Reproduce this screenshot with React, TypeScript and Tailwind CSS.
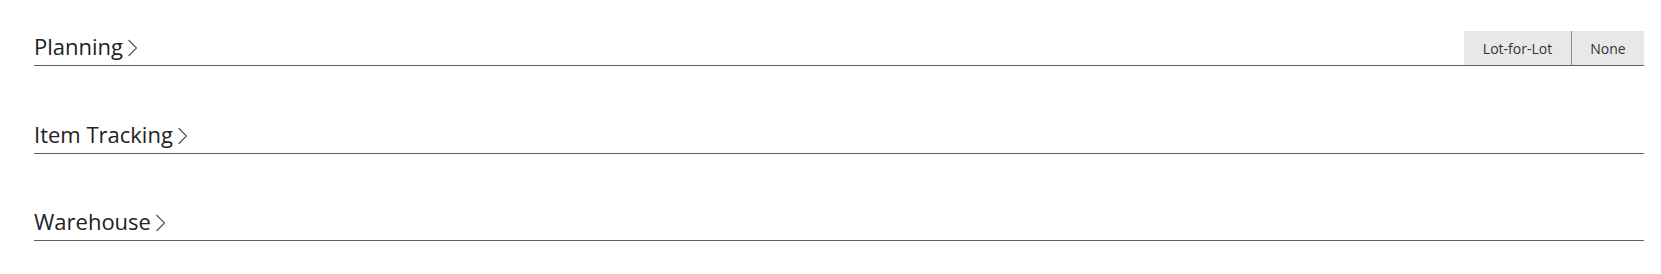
const sections = [
  { title: "Planning", values: ["Lot-for-Lot", "None"] },
  { title: "Item Tracking", values: [] as string[] },
  { title: "Warehouse", values: [] as string[] },
];

function Chevron() {
  return (
    <svg width="11" height="18" viewBox="0 0 11 18" className="ml-[4px] mb-[4px] shrink-0">
      <path d="M1.5 1 L9.5 9 L1.5 17" fill="none" stroke="#505050" strokeWidth="1.1" />
    </svg>
  );
}

export default function App() {
  return (
    <div
      className="min-h-[274px] w-full bg-white pl-[34px] pr-[17px] pt-[31px] text-[#222]"
      style={{ fontFamily: '"Open Sans", "Noto Sans", sans-serif' }}
    >
      {sections.map((s, i) => (
        <div
          key={s.title}
          className={`flex h-[35px] items-end justify-between border-b border-[#565f73] ${
            i === 0 ? "" : i === 1 ? "mt-[53px]" : "mt-[52px]"
          }`}
        >
          <div className="flex items-end pb-[4px]">
            <span className="text-[22px] leading-[30px]">{s.title}</span>
            <Chevron />
          </div>
          {s.values.length > 0 && (
            <div className="flex h-[34px] bg-[#e8e8e8] text-[14px] text-[#333]">
              {s.values.map((v, j) => (
                <div
                  key={v}
                  className={`flex items-center justify-center ${
                    j === 0 ? "w-[107px]" : "w-[73px] border-l border-[#8c8c8c]"
                  }`}
                >
                  {v}
                </div>
              ))}
            </div>
          )}
        </div>
      ))}
    </div>
  );
}
